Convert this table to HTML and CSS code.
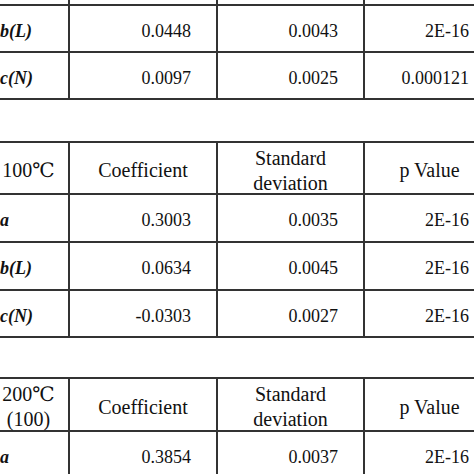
FILE: index.html
```html
<!DOCTYPE html>
<html lang="en">
<head>
<meta charset="utf-8">
<title>Regression coefficients</title>
<link rel="stylesheet" href="styles.css">
</head>
<body>
<div class="page">
  <div class="tbl t1">
    <div class="c lab"></div><div class="c num"></div><div class="c num"></div><div class="c num"></div>
    <div class="c lab"><b>b(L)</b></div><div class="c num">0.0448</div><div class="c num">0.0043</div><div class="c num">2E-16</div>
    <div class="c lab"><b>c(N)</b></div><div class="c num">0.0097</div><div class="c num">0.0025</div><div class="c num">0.000121</div>
  </div>

  <div class="tbl t2">
    <div class="c hd">100℃</div><div class="c hd">Coefficient</div><div class="c hd">Standard<br>deviation</div><div class="c hd">p Value</div>
    <div class="c lab"><b>a</b></div><div class="c num">0.3003</div><div class="c num">0.0035</div><div class="c num">2E-16</div>
    <div class="c lab"><b>b(L)</b></div><div class="c num">0.0634</div><div class="c num">0.0045</div><div class="c num">2E-16</div>
    <div class="c lab"><b>c(N)</b></div><div class="c num">-0.0303</div><div class="c num">0.0027</div><div class="c num">2E-16</div>
  </div>

  <div class="tbl t3">
    <div class="c hd">200℃<br>(100)</div><div class="c hd">Coefficient</div><div class="c hd">Standard<br>deviation</div><div class="c hd">p Value</div>
    <div class="c lab"><b>a</b></div><div class="c num">0.3854</div><div class="c num">0.0037</div><div class="c num">2E-16</div>
  </div>
</div>
</body>
</html>
```
FILE: styles.css
```css
html, body {
  margin: 0;
  padding: 0;
  background: #ffffff;
  overflow: hidden;
}

body {
  width: 474px;
  height: 474px;
  font-family: "Liberation Serif", "DejaVu Serif", serif;
  color: #111111;
}

.page {
  display: flex;
  flex-direction: column;
  align-items: flex-start;
}

.tbl {
  display: grid;
  grid-template-columns: 81px 148px 147px 131px;
  border-top: 2px solid #333333;
  border-left: 2px solid #333333;
  margin-left: -13px;
}

.t1 {
  margin-top: -50px;
  grid-template-rows: 54px 47px 47px;
}

.t2 {
  margin-top: 41px;
  grid-template-rows: 52px 48px 48px 47px;
}

.t3 {
  margin-top: 39px;
  grid-template-rows: 53px 48px;
}

.c {
  box-sizing: border-box;
  border-right: 2px solid #333333;
  border-bottom: 2px solid #333333;
  display: flex;
  align-items: center;
  padding-top: 5px;
  font-size: 18px;
}

.num {
  justify-content: flex-end;
  padding-right: 25px;
}

.lab {
  justify-content: flex-start;
  padding-left: 11px;
}

.lab b {
  font-weight: bold;
  font-style: italic;
}

.hd {
  justify-content: center;
  text-align: center;
  font-size: 20px;
  line-height: 25px;
}
```
